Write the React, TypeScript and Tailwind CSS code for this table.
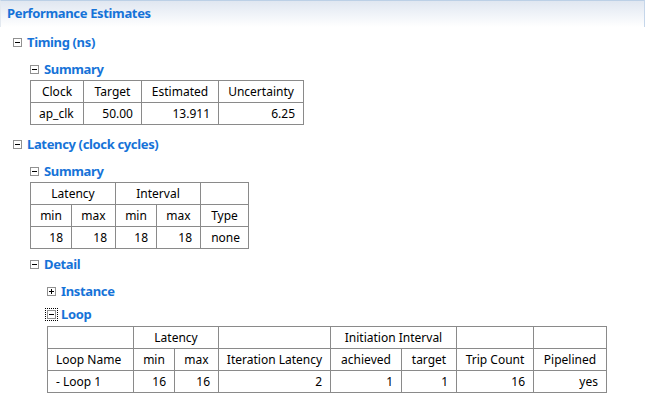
import React from "react";

const font = { fontFamily: '"Noto Sans", "Liberation Sans", sans-serif' };

function Toggle({ open = true, focused = false }: { open?: boolean; focused?: boolean }) {
  return (
    <span
      className={
        focused
          ? "flex h-[11px] w-[11px] items-center justify-center outline-1 outline-dotted outline-black"
          : "flex h-[9px] w-[9px] items-center justify-center"
      }
    >
      <svg width="9" height="9" viewBox="0 0 9 9" className="block">
        <rect x="0.5" y="0.5" width="8" height="8" fill="#fff" stroke="#919191" />
        <line x1="2" y1="4.5" x2="7" y2="4.5" stroke="#000" />
        {!open && <line x1="4.5" y1="2" x2="4.5" y2="7" stroke="#000" />}
      </svg>
    </span>
  );
}

function Heading({
  label,
  level,
  open = true,
  focused = false,
  className = "",
}: {
  label: string;
  level: 1 | 2 | 3;
  open?: boolean;
  focused?: boolean;
  className?: string;
}) {
  const pad = level === 1 ? "pl-[13px]" : level === 2 ? "pl-[30px]" : "pl-[47px]";
  return (
    <div className={`flex h-[20px] items-center ${pad} ${className}`}>
      <div className={focused ? "-ml-[1px] mr-[4px]" : "mr-[5px]"}>
        <Toggle open={open} focused={focused} />
      </div>
      <span className="text-[13px] font-bold tracking-[-0.35px] text-[#1673d8]">{label}</span>
    </div>
  );
}

const th = "h-[22px] whitespace-nowrap border border-[#8a8a8a] px-2 text-center font-normal";
const td = "h-[22px] whitespace-nowrap border border-[#8a8a8a] px-2 text-right";
const tdl = "h-[22px] whitespace-nowrap border border-[#8a8a8a] px-2 text-left";

export default function App() {
  return (
    <div className="h-[409px] w-[645px] overflow-hidden bg-white text-[12px] leading-none text-black" style={font}>
      <div className="flex h-[27px] items-center border-t border-r border-l border-t-[#bcd0e6] border-r-[#c5d6ea] border-l-[#e3e9f0] bg-gradient-to-b from-[#e0e7f1] to-white pl-[6px]">
        <span className="-mt-[1px] text-[13px] font-bold tracking-[-0.35px] text-[#1673d8]">Performance Estimates</span>
      </div>

      <Heading label="Timing (ns)" level={1} className="mt-[5px]" />
      <Heading label="Summary" level={2} className="mt-[7px]" />
      <table className="mt-[1px] ml-[30px] border-collapse">
        <tbody>
          <tr>
            <th className={`${th} w-[53px]`}>Clock</th>
            <th className={`${th} w-[58px]`}>Target</th>
            <th className={`${th} w-[77px]`}>Estimated</th>
            <th className={`${th} w-[85px]`}>Uncertainty</th>
          </tr>
          <tr>
            <td className={tdl}>ap_clk</td>
            <td className={td}>50.00</td>
            <td className={td}>13.911</td>
            <td className={td}>6.25</td>
          </tr>
        </tbody>
      </table>

      <Heading label="Latency (clock cycles)" level={1} className="mt-[9px]" />
      <Heading label="Summary" level={2} className="mt-[7px]" />
      <table className="mt-[1px] ml-[30px] border-collapse">
        <tbody>
          <tr>
            <th className={th} colSpan={2}>Latency</th>
            <th className={th} colSpan={2}>Interval</th>
            <th className={th}></th>
          </tr>
          <tr>
            <th className={`${th} w-[41px]`}>min</th>
            <th className={`${th} w-[44px]`}>max</th>
            <th className={`${th} w-[41px]`}>min</th>
            <th className={`${th} w-[44px]`}>max</th>
            <th className={`${th} w-[48px]`}>Type</th>
          </tr>
          <tr>
            <td className={td}>18</td>
            <td className={td}>18</td>
            <td className={td}>18</td>
            <td className={td}>18</td>
            <td className={td}>none</td>
          </tr>
        </tbody>
      </table>

      <Heading label="Detail" level={2} className="mt-[5px]" />
      <Heading label="Instance" level={3} open={false} className="mt-[7px]" />
      <Heading label="Loop" level={3} focused className="mt-[3px]" />
      <table className="mt-[2px] ml-[47px] border-collapse">
        <tbody>
          <tr>
            <th className={th}></th>
            <th className={th} colSpan={2}>Latency</th>
            <th className={th}></th>
            <th className={th} colSpan={2}>Initiation Interval</th>
            <th className={th}></th>
            <th className={th}></th>
          </tr>
          <tr>
            <th className={`${th} w-[86px] text-left`}>Loop Name</th>
            <th className={`${th} w-[41px]`}>min</th>
            <th className={`${th} w-[44px]`}>max</th>
            <th className={`${th} w-[112px] px-[6px]`}>Iteration Latency</th>
            <th className={`${th} w-[71px]`}>achieved</th>
            <th className={`${th} w-[55px]`}>target</th>
            <th className={`${th} w-[77px]`}>Trip Count</th>
            <th className={`${th} w-[73px]`}>Pipelined</th>
          </tr>
          <tr>
            <td className={tdl}>- Loop 1</td>
            <td className={td}>16</td>
            <td className={td}>16</td>
            <td className={td}>2</td>
            <td className={td}>1</td>
            <td className={td}>1</td>
            <td className={td}>16</td>
            <td className={td}>yes</td>
          </tr>
        </tbody>
      </table>
    </div>
  );
}
